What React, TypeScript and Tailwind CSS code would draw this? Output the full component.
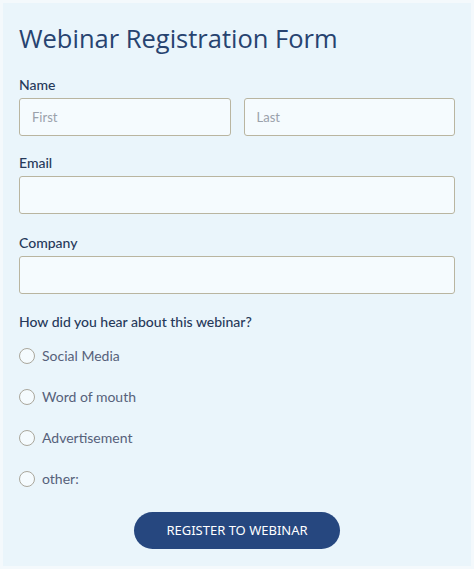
import React from 'react';

const labelCls = 'block text-[14px] font-medium text-[#26395a] leading-5';
const inputCls =
    'w-full h-[38px] rounded-[3px] border border-[#b9b5a0] bg-[#f5fbfe] px-3 text-[13px] text-[#55606f] placeholder:text-[#9aa1ab] outline-none';

const sources = ['Social Media', 'Word of mouth', 'Advertisement', 'other:'];

export default function App() {
    return (
        <div
            className="w-[474px] h-[569px] border-[3px] border-[#f4f9fc] bg-[#eaf5fb] px-4 pt-[17px] overflow-hidden"
            style={{ fontFamily: '"Lato", "Noto Sans", sans-serif' }}
        >
            <h1
                className="text-[25.5px] leading-9 text-[#274370]"
                style={{ fontFamily: '"Open Sans", sans-serif' }}
            >
                Webinar Registration Form
            </h1>

            <form className="mt-[19px]" onSubmit={(e) => e.preventDefault()}>
                <label className={labelCls}>Name</label>
                <div className="mt-[3px] flex gap-[13px]">
                    <input className={inputCls} placeholder="First" />
                    <input className={inputCls} placeholder="Last" />
                </div>

                <label className={`${labelCls} mt-[17px]`}>Email</label>
                <input className={`${inputCls} mt-[3px]`} />

                <label className={`${labelCls} mt-[19px]`}>Company</label>
                <input className={`${inputCls} mt-[3px]`} />

                <p className={`${labelCls} mt-[18px]`}>How did you hear about this webinar?</p>
                <div className="mt-[14px] flex flex-col gap-[21px]">
                    {sources.map((s) => (
                        <label key={s} className="flex items-center gap-[7px] text-[14px] leading-5 text-[#56617a]">
                            <span className="w-[16px] h-[16px] rounded-full border border-[#aaa79c] bg-[#f5fbfe]" />
                            {s}
                        </label>
                    ))}
                </div>

                <div className="mt-[23px] flex justify-center">
                    <button
                        type="submit"
                        className="w-[206px] h-[37px] rounded-full bg-[#26477f] text-[13px] text-white"
                        style={{ fontFamily: '"Noto Sans", sans-serif' }}
                    >
                        REGISTER TO WEBINAR
                    </button>
                </div>
            </form>
        </div>
    );
}
